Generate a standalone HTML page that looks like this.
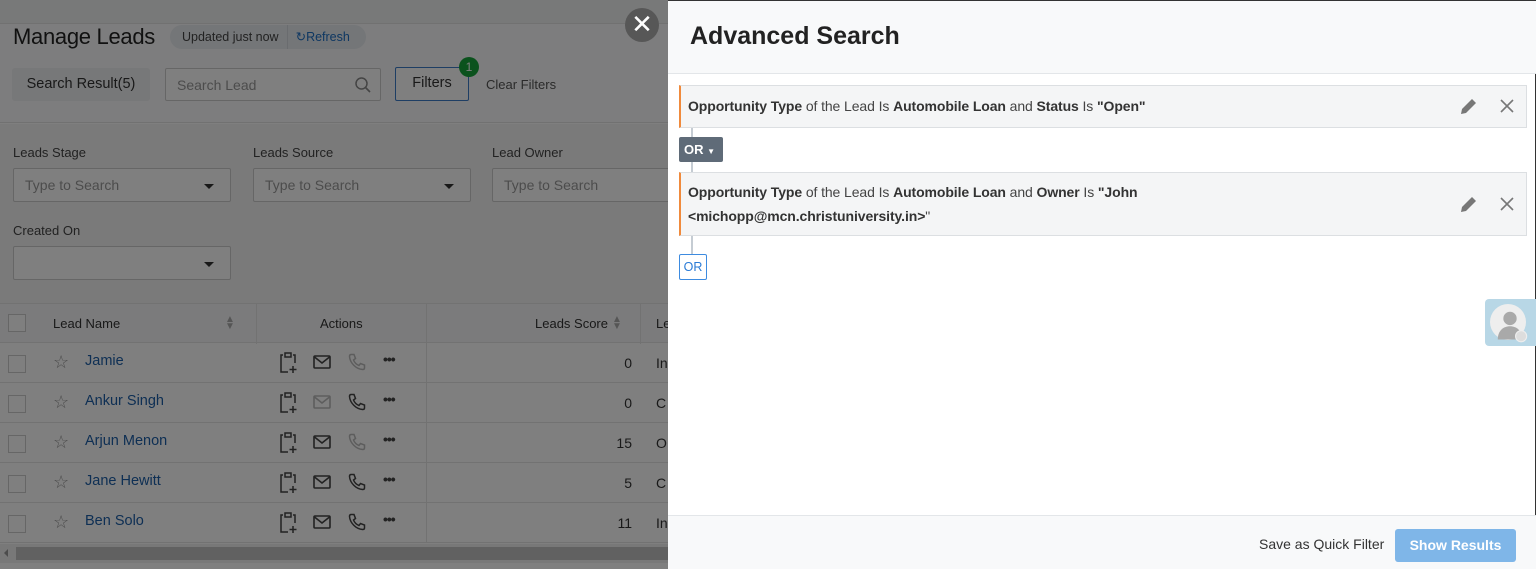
<!DOCTYPE html>
<html><head><meta charset="utf-8"><style>
*{box-sizing:border-box;margin:0;padding:0}
html{background:#333}
body{width:1536px;height:569px;overflow:hidden;font-family:"Liberation Sans",sans-serif;position:relative;background:#fff;box-shadow:inset 0 0 0 1px #333}
.abs{position:absolute}
#left{position:absolute;left:0;top:0;width:668px;height:569px;background:#fff;overflow:hidden;color:#333}
#ov{position:absolute;left:0;top:0;width:668px;height:569px;background:rgba(0,0,0,.5)}
.inp{position:absolute;border:1px solid #ccc;background:#fff;border-radius:2px;color:#999;font-size:14px;padding-left:11px;display:flex;align-items:center}
.car{position:absolute;right:16px;top:15px;border-left:5px solid transparent;border-right:5px solid transparent;border-top:5px solid #333}
.lbl{position:absolute;font-size:13px;color:#444}
.row{position:absolute;left:0;width:668px;height:40px;border-bottom:1px solid #e4e4e4}
.cb{position:absolute;left:8px;top:12px;width:18px;height:18px;border:1px solid #ccc;background:#fff}
.nm{position:absolute;left:85px;top:10px;font-size:14.5px;color:#1d5fa8}
.sc{position:absolute;right:36px;top:12px;font-size:14px;color:#333}
.le{position:absolute;left:656px;top:12px;font-size:14px}
#right{position:absolute;left:668px;top:1px;width:867px;height:567px;background:#fff}
.rule{position:absolute;left:11px;width:848px;background:#f4f5f6;border:1px solid #dcdfe2;border-left:2px solid #f08a3c;font-size:14px;color:#444;padding:0 0 0 7px;line-height:24px;letter-spacing:-0.1px}
.rule b{color:#333}
.vl{position:absolute;left:23px;width:2px;background:#c5ccd3}
</style></head><body>
<div id="left">
 <div class="abs" style="left:0;top:0;width:668px;height:123px;background:#fafbfc;border-bottom:1px solid #e2e2e2"></div>
 <div class="abs" style="left:0;top:0;width:668px;height:24px;background:#f1f2f3;border-bottom:1px solid #e2e2e2"></div>
 <div class="abs" style="left:13px;top:24px;font-size:22px;color:#222;letter-spacing:-0.3px">Manage Leads</div>
 <div class="abs" style="left:170px;top:25px;width:196px;height:24px;background:#e8ecf0;border-radius:12px;font-size:12.5px;color:#444;line-height:24px;padding-left:12px">Updated just now<span style="display:inline-block;width:1px;height:24px;background:#d4d9de;margin:0 8px;vertical-align:top"></span><span style="color:#1d6fc4">&#x21bb;Refresh</span></div>
 <div class="abs" style="left:12px;top:68px;width:138px;height:33px;background:#eef0f2;border-radius:3px;font-size:14.5px;line-height:33px;text-align:center;color:#333">Search Result(5)</div>
 <div class="inp" style="left:165px;top:68px;width:216px;height:33px">Search Lead
  <svg class="abs" style="right:9px;top:8px" width="16" height="16" viewBox="0 0 16 16"><circle cx="6.5" cy="6.5" r="5.5" fill="none" stroke="#888" stroke-width="1.5"/><path d="M10.5 10.5L15 15" stroke="#888" stroke-width="1.6"/></svg></div>
 <div class="abs" style="left:395px;top:67px;width:74px;height:34px;border:1px solid #3d7cc9;border-radius:2px;background:#fff;font-size:14.5px;line-height:31px;text-align:center;color:#333">Filters</div>
 <div class="abs" style="left:459px;top:57px;width:20px;height:20px;border-radius:50%;background:#17a43a;color:#fff;font-size:12px;text-align:center;line-height:20px">1</div>
 <div class="abs" style="left:486px;top:77px;font-size:13px;color:#555">Clear Filters</div>
 <div class="abs" style="left:0;top:124px;width:668px;height:180px;background:#f4f4f4"></div>
 <div class="lbl" style="left:13px;top:145px">Leads Stage</div>
 <div class="lbl" style="left:253px;top:145px">Leads Source</div>
 <div class="lbl" style="left:492px;top:145px">Lead Owner</div>
 <div class="inp" style="left:13px;top:168px;width:218px;height:34px">Type to Search<span class="car"></span></div>
 <div class="inp" style="left:253px;top:168px;width:218px;height:34px">Type to Search<span class="car"></span></div>
 <div class="inp" style="left:492px;top:168px;width:200px;height:34px">Type to Search</div>
 <div class="lbl" style="left:13px;top:223px">Created On</div>
 <div class="inp" style="left:13px;top:246px;width:218px;height:34px"><span class="car"></span></div>
 <div class="row" style="top:303px;height:40px;background:#f6f7f8;border-top:1px solid #e4e4e4">
  <div class="cb" style="top:10px"></div>
  <div class="abs" style="left:53px;top:12px;font-size:13px">Lead Name</div>
  <div class="abs" style="left:225px;top:12px;font-size:10px;color:#aaa;line-height:7px">▲<br>▼</div>
  <div class="abs" style="left:256px;top:0;width:1px;height:40px;background:#e4e4e4"></div>
  <div class="abs" style="left:320px;top:12px;font-size:13px">Actions</div>
  <div class="abs" style="left:426px;top:0;width:1px;height:40px;background:#e4e4e4"></div>
  <div class="abs" style="left:535px;top:12px;font-size:13px">Leads Score</div>
  <div class="abs" style="left:612px;top:12px;font-size:10px;color:#aaa;line-height:7px">▲<br>▼</div>
  <div class="abs" style="left:640px;top:0;width:1px;height:40px;background:#e4e4e4"></div>
  <div class="le" style="top:12px;font-size:13px">Le</div>
 </div>
 <div class="abs" style="left:426px;top:343px;width:1px;height:200px;background:#e4e4e4"></div>
 <div id="rows"></div>
 <div class="abs" style="left:0;top:544px;width:668px;height:19px;background:#f1f1f1"></div>
 <div class="abs" style="left:16px;top:547px;width:652px;height:13px;background:#c2c2c2"></div>
 <div class="abs" style="left:4px;top:549px;border-top:4px solid transparent;border-bottom:4px solid transparent;border-right:4px solid #999"></div>
 <div id="ov"></div>
</div>
<div class="abs" style="left:625px;top:8px;width:34px;height:34px;border-radius:50%;background:#575757;color:#fff;font-size:26px;text-align:center;line-height:33px">✕</div>

<div id="right">
 <div class="abs" style="left:0;top:0;width:868px;height:73px;background:#f8f9fa;border-bottom:1px solid #e3e6e9"></div>
 <div class="abs" style="left:22px;top:21px;font-size:25px;font-weight:bold;color:#222">Advanced Search</div>
 <div class="rule" style="top:84px;height:43px;padding-top:8px"><b>Opportunity Type</b> of the Lead Is <b>Automobile Loan</b> and <b>Status</b> Is <b>"Open"</b></div>
 <div class="vl" style="top:127px;height:10px"></div>
 <div class="abs" style="left:11px;top:136px;width:44px;height:25px;background:#5f6b78;border-radius:2px;color:#fff;font-size:13px;font-weight:bold;line-height:25px;padding-left:5px">OR <span style="font-size:8px">▼</span></div>
 <div class="vl" style="top:161px;height:10px"></div>
 <div class="rule" style="top:171px;height:64px;padding-top:7px"><b>Opportunity Type</b> of the Lead Is <b>Automobile Loan</b> and <b>Owner</b> Is <b>"John<br>&lt;michopp@mcn.christuniversity.in&gt;</b>"</div>
 <div class="vl" style="top:235px;height:18px"></div>
 <div class="abs" style="left:11px;top:253px;width:28px;height:26px;border:1px solid #3d8be0;border-radius:2px;background:#fff;color:#2a7bd6;font-size:12.5px;line-height:24px;text-align:center">OR</div>
 <svg class="abs" style="left:791px;top:95px" width="20" height="20" viewBox="0 0 20 20"><path d="M2 18l1-5L13 3l4 4L7 17z" fill="#777"/></svg>
 <svg class="abs" style="left:832px;top:98px" width="14" height="14" viewBox="0 0 14 14"><path d="M1 1L13 13M13 1L1 13" stroke="#777" stroke-width="1.6"/></svg>
 <svg class="abs" style="left:791px;top:193px" width="20" height="20" viewBox="0 0 20 20"><path d="M2 18l1-5L13 3l4 4L7 17z" fill="#777"/></svg>
 <svg class="abs" style="left:832px;top:196px" width="14" height="14" viewBox="0 0 14 14"><path d="M1 1L13 13M13 1L1 13" stroke="#777" stroke-width="1.6"/></svg>
 <div class="abs" style="left:817px;top:298px;width:51px;height:47px;background:#b8d7e6;border-radius:4px 0 0 4px">
  <div class="abs" style="left:5px;top:5px;width:36px;height:36px;border-radius:50%;background:#eee"></div>
  <svg class="abs" style="left:5px;top:5px" width="40" height="40" viewBox="0 0 36 36"><circle cx="18" cy="13" r="6" fill="#a9a9a9"/><path d="M7 32c0-8 5-12 11-12s11 4 11 12z" fill="#a9a9a9"/><circle cx="28" cy="29" r="5" fill="#ddd" stroke="#eee"/></svg>
 </div>
 <div class="abs" style="left:0;top:514px;width:868px;height:54px;background:#f8f9fa;border-top:1px solid #e3e6e9"></div>
 <div class="abs" style="left:591px;top:535px;font-size:14px;color:#333">Save as Quick Filter</div>
 <div class="abs" style="left:727px;top:528px;width:121px;height:33px;background:#7fb6e8;border-radius:3px;color:#fff;font-size:14px;font-weight:bold;text-align:center;line-height:33px">Show Results</div>
</div>
<script>
var d=[["Jamie","0","In",1,0],["Ankur Singh","0","C",0,1],["Arjun Menon","15","O",1,0],["Jane Hewitt","5","C",1,1],["Ben Solo","11","In",1,1]];
var h="";
d.forEach(function(r,i){
var t=343+i*40;
var m=r[3]?"#444":"#bbb",p=r[4]?"#444":"#bbb";
h+='<div class="row" style="top:'+t+'px"><div class="cb"></div><div class="abs" style="left:53px;top:9px;font-size:18px;color:#999">☆</div><div class="nm">'+r[0]+'</div>'+
'<svg class="abs" style="left:278px;top:8px" width="22" height="24" viewBox="0 0 22 24"><path d="M5 4H3v17h7M15 4h2v8" fill="none" stroke="#444" stroke-width="1.5"/><rect x="7" y="2" width="6" height="4" fill="none" stroke="#444" stroke-width="1.5"/><path d="M15 15v7M11.5 18.5h7" stroke="#444" stroke-width="1.5"/></svg>'+
'<svg class="abs" style="left:313px;top:11px" width="18" height="16" viewBox="0 0 18 16"><rect x="1" y="2" width="16" height="12" rx="1" fill="none" stroke="'+m+'" stroke-width="1.6"/><path d="M1.5 3L9 9l7.5-6" fill="none" stroke="'+m+'" stroke-width="1.6"/></svg>'+
'<svg class="abs" style="left:348px;top:10px" width="18" height="18" viewBox="0 0 18 18"><path d="M3 1.5l3 0 1.5 4-2 1.5c1 2.5 3 4.5 5.5 5.5l1.5-2 4 1.5v3c0 1-1 1.5-2 1.5C8 16 2 10 1.5 3.5 1.5 2.5 2 1.5 3 1.5z" fill="none" stroke="'+p+'" stroke-width="1.5"/></svg>'+
'<div class="abs" style="left:383px;top:8px;font-size:14px;font-weight:bold;letter-spacing:-1px;color:#444">•••</div>'+
'<div class="sc">'+r[1]+'</div><div class="le">'+r[2]+'</div></div>';
});
document.getElementById("rows").outerHTML=h;
</script>
</body></html>
